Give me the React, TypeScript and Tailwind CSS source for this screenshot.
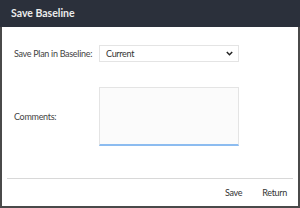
import React from "react";

export default function App() {
  return (
    <div className="w-[300px] h-[208px] bg-[#4a4a4a] flex flex-col" style={{ fontFamily: "Lato, 'Noto Sans', sans-serif" }}>
      <div className="h-[27px] bg-[#2b303b] flex items-center pl-[11px] shrink-0">
        <span className="text-[10.5px] font-bold text-[#ececec]">Save Baseline</span>
      </div>
      <div className="flex-1 ml-[2px] mr-[2px] mb-[2px] bg-white flex flex-col">
        <div className="flex flex-col pt-[18px] pl-[12px]">
          <div className="flex items-center h-[17px]">
            <span className="w-[85px] whitespace-nowrap text-[9px] tracking-[-0.3px] text-[#444]">Save Plan in Baseline:</span>
            <div className="w-[140px] h-[17px] border border-[#e4e4e4] flex items-center justify-between pl-[6px] pr-[5px]">
              <span className="text-[9px] tracking-[-0.3px] text-[#333]">Current</span>
              <svg width="7" height="5" viewBox="0 0 7 5"><path d="M0.8 1 L3.5 3.7 L6.2 1" fill="none" stroke="#222" strokeWidth="1.5" /></svg>
            </div>
          </div>
          <div className="flex items-center mt-[25px]">
            <span className="w-[85px] whitespace-nowrap text-[9px] tracking-[-0.3px] text-[#444]">Comments:</span>
            <div className="w-[140px] h-[59px] border border-[#e4e4e4] border-b-2 border-b-[#8cbcf0] bg-[#fbfbfb]" />
          </div>
        </div>
        <div className="mt-[32px] mx-[5px] h-px bg-[#d8d8d8]" />
        <div className="flex-1 flex items-center justify-end pr-[11px] gap-[20px]">
          <span className="text-[9px] tracking-[-0.3px] text-[#333]">Save</span>
          <span className="text-[9px] tracking-[-0.3px] text-[#333]">Return</span>
        </div>
      </div>
    </div>
  );
}
